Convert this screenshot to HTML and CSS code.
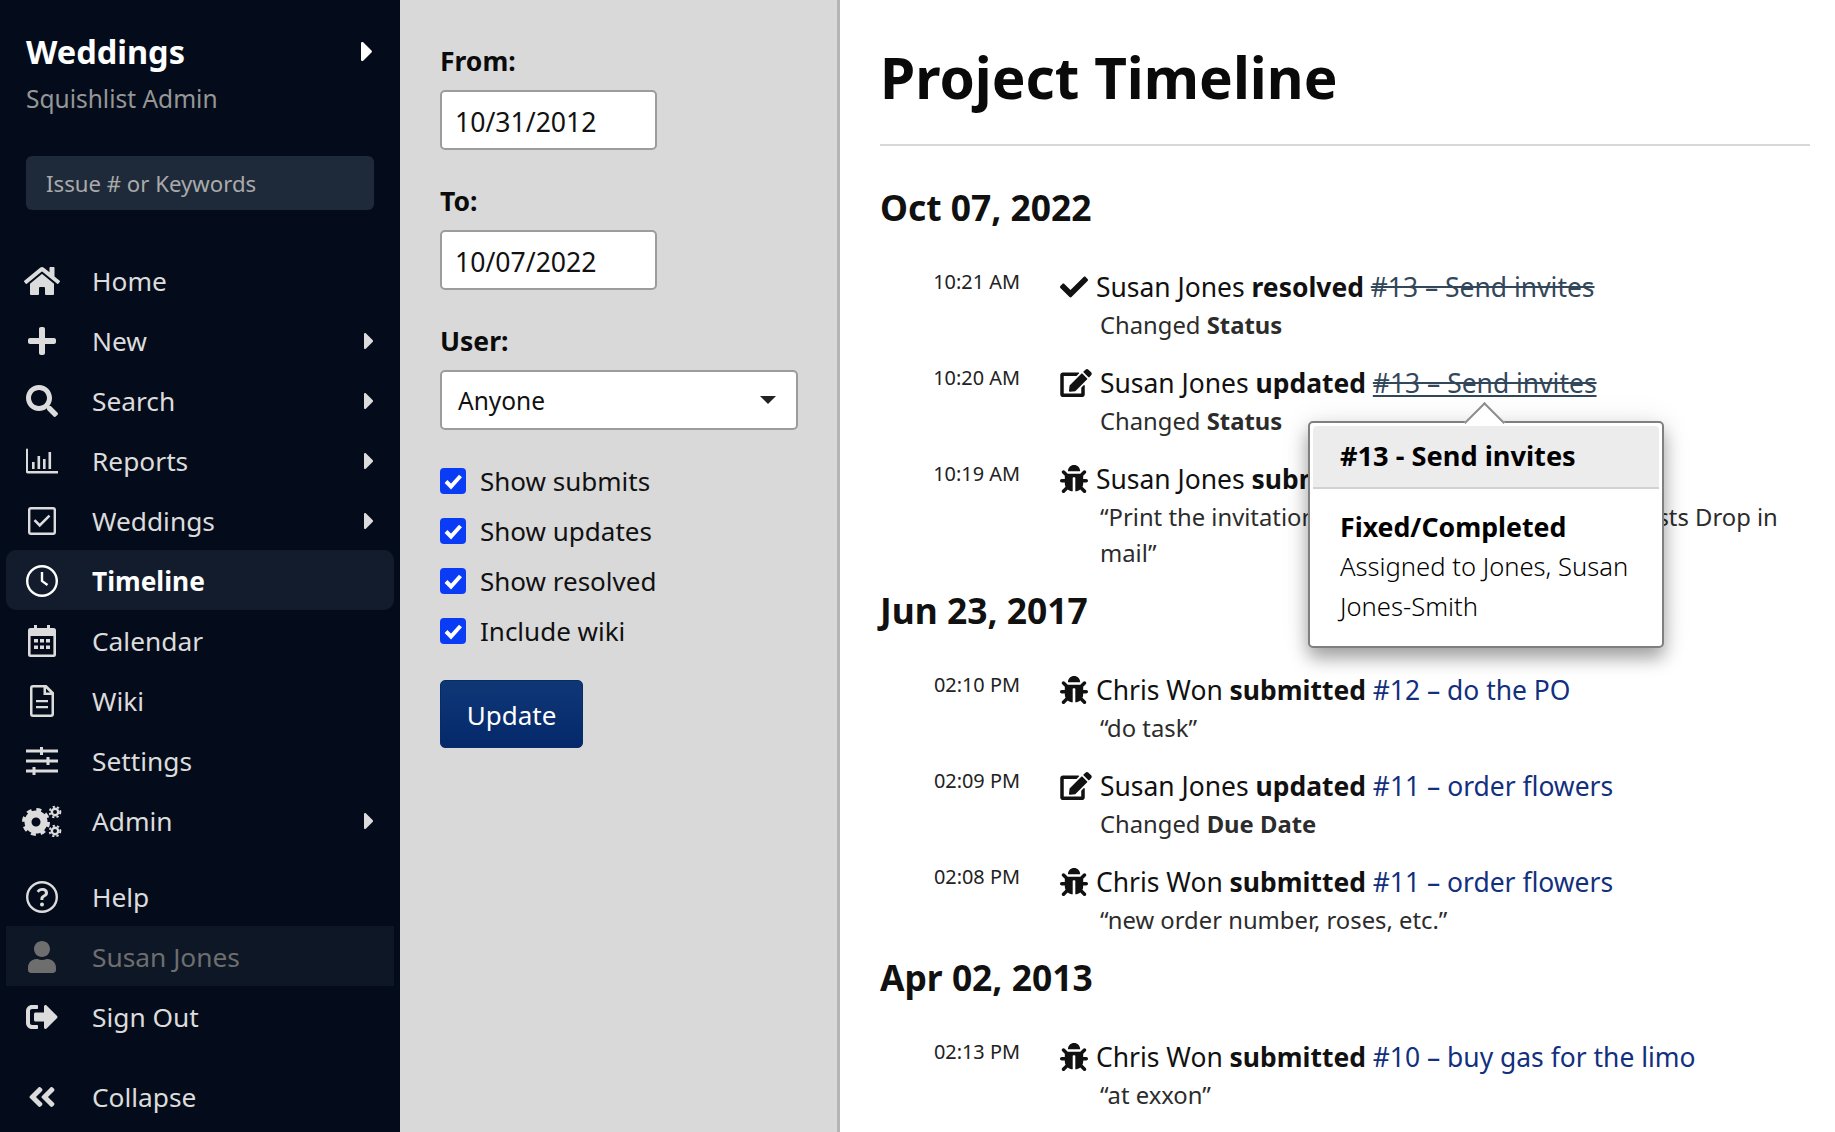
FILE: index.html
```html
<!DOCTYPE html>
<html lang="en">
<head>
<meta charset="utf-8">
<title>Project Timeline</title>
<link rel="stylesheet" href="styles.css">
</head>
<body>
<svg class="defs" width="0" height="0" aria-hidden="true">
  <symbol id="i-caret" viewBox="0 0 192 512"><path d="M0 384.662V127.338c0-17.818 21.543-26.741 34.142-14.142l128.662 128.662c7.81 7.81 7.81 20.474 0 28.284L34.142 398.804C21.543 411.404 0 402.48 0 384.662z"/></symbol>
  <symbol id="i-home" viewBox="0 0 576 512"><path d="M280.37 148.26L96 300.11V464a16 16 0 0 0 16 16l112.06-.29a16 16 0 0 0 15.92-16V368a16 16 0 0 1 16-16h64a16 16 0 0 1 16 16v95.64a16 16 0 0 0 16 16.05L464 480a16 16 0 0 0 16-16V300L295.67 148.26a12.19 12.19 0 0 0-15.3 0zM571.6 251.47L488 182.56V44.05a12 12 0 0 0-12-12h-56a12 12 0 0 0-12 12v72.61L318.47 43a48 48 0 0 0-61 0L4.34 251.47a12 12 0 0 0-1.6 16.9l25.5 31A12 12 0 0 0 45.15 301l235.22-193.74a12.19 12.19 0 0 1 15.3 0L530.9 301a12 12 0 0 0 16.9-1.6l25.5-31a12 12 0 0 0-1.7-16.93z"/></symbol>
  <symbol id="i-plus" viewBox="0 0 448 512"><path d="M416 208H272V64c0-17.67-14.33-32-32-32h-32c-17.67 0-32 14.33-32 32v144H32c-17.67 0-32 14.33-32 32v32c0 17.67 14.33 32 32 32h144v144c0 17.67 14.33 32 32 32h32c17.67 0 32-14.33 32-32V304h144c17.67 0 32-14.33 32-32v-32c0-17.67-14.33-32-32-32z"/></symbol>
  <symbol id="i-search" viewBox="0 0 512 512"><path d="M505 442.7L405.3 343c-4.5-4.5-10.6-7-17-7H372c27.6-35.3 44-79.7 44-128C416 93.1 322.9 0 208 0S0 93.1 0 208s93.1 208 208 208c48.3 0 92.7-16.4 128-44v16.3c0 6.4 2.5 12.5 7 17l99.7 99.7c9.4 9.4 24.6 9.4 33.9 0l28.3-28.3c9.4-9.4 9.4-24.6.1-34zM208 336c-70.7 0-128-57.2-128-128 0-70.7 57.2-128 128-128 70.7 0 128 57.2 128 128 0 70.7-57.2 128-128 128z"/></symbol>
  <symbol id="i-chart" viewBox="0 0 32 26"><path d="M0 1.5a1 1 0 0 1 2 0V23h30v2.4H1.5A1.5 1.5 0 0 1 0 24zM6 14h2.6v7H6zM11.5 8h2.6v13h-2.6zM17 11h2.6v10H17zM22.5 4h2.6v17h-2.6z"/></symbol>
  <symbol id="i-checksq" viewBox="0 0 28 28"><path fill-rule="evenodd" d="M3 0h22a3 3 0 0 1 3 3v22a3 3 0 0 1-3 3H3a3 3 0 0 1-3-3V3a3 3 0 0 1 3-3zm0 2.4a.6.6 0 0 0-.6.6v22c0 .3.3.6.6.6h22c.3 0 .6-.3.6-.6V3a.6.6 0 0 0-.6-.6z"/><path d="M11.7 20.2 5.6 14.100l1.800-1.800 4.300 4.300 8.900-8.900 1.800 1.800z"/></symbol>
  <symbol id="i-clock" viewBox="0 0 32 32"><path fill-rule="evenodd" d="M16 0a16 16 0 1 1 0 32 16 16 0 0 1 0-32zm0 2.400a13.600 13.600 0 1 0 0 27.200 13.600 13.600 0 0 0 0-27.200z"/><path d="M14.800 7h2.400v8.400l5 3.700-1.400 1.900-6-4.500z"/></symbol>
  <symbol id="i-cal" viewBox="0 0 28 32"><path fill-rule="evenodd" d="M6 0h3v3h10V0h3v3h3.500A2.500 2.500 0 0 1 28 5.500V29.500a2.500 2.500 0 0 1-2.500 2.500h-23A2.500 2.500 0 0 1 0 29.500V5.500A2.500 2.500 0 0 1 2.500 3H6zM2.600 11v18.400h22.800V11z"/><path d="M6 14h4v3.500H6zM12 14h4v3.500h-4zM18 14h4v3.500h-4zM6 20.500h4V24H6zM12 20.500h4V24h-4zM18 20.500h4V24h-4z"/></symbol>
  <symbol id="i-file" viewBox="0 0 24 32"><path fill-rule="evenodd" d="M3 0h13.500L24 7.500V29a3 3 0 0 1-3 3H3a3 3 0 0 1-3-3V3a3 3 0 0 1 3-3zm0 2.500a.5.500 0 0 0-.5.500v26c0 .3.200.5.500.5h18c.3 0 .5-.2.500-.5V10h-8V2.500zM16 3.500V7.500h4z"/><path d="M6 15h12v2.300H6zM6 21h12v2.300H6z"/></symbol>
  <symbol id="i-sliders" viewBox="0 0 32 28"><path d="M0 2.500h14V0h3v2.500h15v3H17V8h-3V5.500H0zM0 12.500h20.500V10h3v2.500H32v3h-8.500V18h-3v-2.500H0zM0 22.500h6.500V20h3v2.500H32v3H9.500V28h-3v-2.500H0z"/></symbol>
  <symbol id="i-cogs" viewBox="0 0 40 32">
    <g><circle cx="14" cy="17" r="8" fill="none" stroke="currentColor" stroke-width="7"/><circle cx="14" cy="17" r="12" fill="none" stroke="currentColor" stroke-width="4" stroke-dasharray="4.800 4.620"/></g>
    <g><circle cx="33" cy="7" r="3.200" fill="none" stroke="currentColor" stroke-width="2.400"/><circle cx="33" cy="7" r="5.300" fill="none" stroke="currentColor" stroke-width="2" stroke-dasharray="2.200 2.200"/></g>
    <g><circle cx="33" cy="26" r="3.200" fill="none" stroke="currentColor" stroke-width="2.400"/><circle cx="33" cy="26" r="5.300" fill="none" stroke="currentColor" stroke-width="2" stroke-dasharray="2.200 2.200"/></g>
  </symbol>
  <symbol id="i-help" viewBox="0 0 32 32"><path fill-rule="evenodd" d="M16 0a16 16 0 1 1 0 32 16 16 0 0 1 0-32zm0 2.400a13.600 13.600 0 1 0 0 27.200 13.600 13.600 0 0 0 0-27.200z"/><path d="M16.200 7c3.500 0 5.800 2 5.800 4.700 0 2.300-1.200 3.400-2.900 4.400-1.300.8-1.700 1.200-1.700 2.200v.7h-3v-1c0-2 1-3 2.500-3.900 1.400-.8 2-1.300 2-2.300 0-1.200-1.100-2-2.700-2-1.500 0-2.500.7-3.300 1.900l-2.300-1.600C12.100 8 13.800 7 16.200 7zM16 21.500a2 2 0 1 1 0 4 2 2 0 0 1 0-4z"/></symbol>
  <symbol id="i-user" viewBox="0 0 448 512"><path d="M224 256c70.700 0 128-57.300 128-128S294.700 0 224 0 96 57.300 96 128s57.300 128 128 128zm89.600 32h-16.700c-22.200 10.200-46.900 16-72.900 16s-50.600-5.800-72.900-16h-16.700C60.200 288 0 348.200 0 422.400V464c0 26.500 21.500 48 48 48h352c26.500 0 48-21.500 48-48v-41.600c0-74.200-60.200-134.400-134.400-134.400z"/></symbol>
  <symbol id="i-out" viewBox="0 0 512 512"><path d="M497 273L329 441c-15 15-41 4.500-41-17v-96H152c-13.300 0-24-10.700-24-24v-96c0-13.300 10.700-24 24-24h136V88c0-21.400 25.900-32 41-17l168 168c9.300 9.400 9.300 24.600 0 34zM192 436v-40c0-6.600-5.400-12-12-12H96c-17.700 0-32-14.300-32-32V160c0-17.700 14.300-32 32-32h84c6.600 0 12-5.400 12-12V76c0-6.600-5.400-12-12-12H96c-53 0-96 43-96 96v192c0 53 43 96 96 96h84c6.600 0 12-5.400 12-12z"/></symbol>
  <symbol id="i-dbl" viewBox="0 0 448 512"><path d="M223.700 239l136-136c9.400-9.400 24.600-9.400 33.900 0l22.600 22.600c9.400 9.400 9.400 24.600 0 33.900L319.900 256l96.400 96.400c9.400 9.400 9.400 24.600 0 33.900L393.700 409c-9.400 9.400-24.600 9.400-33.900 0l-136-136c-9.500-9.400-9.500-24.600-.1-34zm-192 34l136 136c9.400 9.400 24.600 9.400 33.900 0l22.600-22.600c9.400-9.400 9.400-24.600 0-33.900L127.900 256l96.400-96.400c9.400-9.400 9.400-24.600 0-33.900L201.700 103c-9.400-9.400-24.600-9.400-33.900 0l-136 136c-9.500 9.400-9.500 24.600-.1 34z"/></symbol>
  <symbol id="i-check" viewBox="0 0 512 512"><path d="M173.898 439.404l-166.400-166.400c-9.997-9.997-9.997-26.206 0-36.204l36.203-36.204c9.997-9.998 26.207-9.998 36.204 0L192 312.690 432.095 72.596c9.997-9.997 26.207-9.997 36.204 0l36.203 36.204c9.997 9.997 9.997 26.206 0 36.204l-294.400 294.401c-9.998 9.997-26.207 9.997-36.204-.001z"/></symbol>
  <symbol id="i-edit" viewBox="0 0 576 512"><path d="M402.600 83.200l90.200 90.200c3.800 3.800 3.800 10 0 13.800L274.400 405.600l-92.800 10.300c-12.400 1.400-22.900-9.100-21.500-21.500l10.300-92.800L388.800 83.200c3.800-3.800 10-3.800 13.800 0zm162-22.900l-48.800-48.800c-15.200-15.200-39.900-15.200-55.200 0l-35.400 35.400c-3.800 3.800-3.800 10 0 13.800l90.200 90.200c3.800 3.800 10 3.800 13.800 0l35.400-35.400c15.200-15.300 15.200-40 0-55.200zM384 346.200V448H64V128h229.800c3.200 0 6.200-1.300 8.500-3.500l40-40c7.600-7.600 2.200-20.500-8.500-20.500H48C21.500 64 0 85.500 0 112v352c0 26.500 21.500 48 48 48h352c26.500 0 48-21.500 48-48V306.200c0-10.700-12.900-16-20.500-8.500l-40 40c-2.200 2.300-3.500 5.300-3.500 8.500z"/></symbol>
  <symbol id="i-bug" viewBox="0 0 512 512"><path d="M511.988 288.900c-.478 17.430-15.217 31.100-32.653 31.100H424v16c0 21.864-4.882 42.584-13.600 61.145l60.228 60.228c12.496 12.497 12.496 32.758 0 45.255-12.498 12.497-32.759 12.496-45.256 0l-54.736-54.736C345.886 467.965 314.351 480 280 480V236c0-6.627-5.373-12-12-12h-24c-6.627 0-12 5.373-12 12v244c-34.351 0-65.886-12.035-90.636-32.108l-54.736 54.736c-12.498 12.497-32.759 12.496-45.256 0-12.496-12.497-12.496-32.758 0-45.255l60.228-60.228C92.882 378.584 88 357.864 88 336v-16H32.666C15.230 320 .491 306.330.013 288.900-.484 270.816 14.028 256 32 256h56v-58.745l-46.628-46.628c-12.496-12.497-12.496-32.758 0-45.255 12.498-12.497 32.758-12.497 45.256 0L141.255 160h229.489l54.627-54.627c12.498-12.497 32.758-12.497 45.256 0 12.496 12.497 12.496 32.758 0 45.255L424 197.255V256h56c17.972 0 32.484 14.816 31.988 32.900zM257 0c-61.856 0-112 50.144-112 112h224C369 50.144 318.856 0 257 0z"/></symbol>
</svg>

<div class="app">
  <aside class="sidebar">
    <header class="brand">
      <div class="brand-top">
        <span class="brand-name">Weddings</span>
        <svg class="caret caret-lg"><use href="#i-caret"/></svg>
      </div>
      <div class="brand-sub">Squishlist Admin</div>
    </header>
    <div class="quick-search">Issue # or Keywords</div>
    <nav class="nav">
      <a class="nav-item"><span class="nav-ico"><svg class="ic-home"><use href="#i-home"/></svg></span>Home</a>
      <a class="nav-item"><span class="nav-ico"><svg class="ic-plus"><use href="#i-plus"/></svg></span>New<svg class="caret"><use href="#i-caret"/></svg></a>
      <a class="nav-item"><span class="nav-ico"><svg class="ic-search"><use href="#i-search"/></svg></span>Search<svg class="caret"><use href="#i-caret"/></svg></a>
      <a class="nav-item"><span class="nav-ico"><svg class="ic-chart"><use href="#i-chart"/></svg></span>Reports<svg class="caret"><use href="#i-caret"/></svg></a>
      <a class="nav-item"><span class="nav-ico"><svg class="ic-checksq"><use href="#i-checksq"/></svg></span>Weddings<svg class="caret"><use href="#i-caret"/></svg></a>
      <a class="nav-item is-current"><span class="nav-ico"><svg class="ic-clock"><use href="#i-clock"/></svg></span>Timeline</a>
      <a class="nav-item"><span class="nav-ico"><svg class="ic-cal"><use href="#i-cal"/></svg></span>Calendar</a>
      <a class="nav-item"><span class="nav-ico"><svg class="ic-file"><use href="#i-file"/></svg></span>Wiki</a>
      <a class="nav-item"><span class="nav-ico"><svg class="ic-sliders"><use href="#i-sliders"/></svg></span>Settings</a>
      <a class="nav-item"><span class="nav-ico"><svg class="ic-cogs"><use href="#i-cogs"/></svg></span>Admin<svg class="caret"><use href="#i-caret"/></svg></a>
    </nav>
    <nav class="nav nav-second">
      <a class="nav-item"><span class="nav-ico"><svg class="ic-clock"><use href="#i-help"/></svg></span>Help</a>
      <a class="nav-item is-user"><span class="nav-ico"><svg class="ic-user"><use href="#i-user"/></svg></span>Susan Jones</a>
      <a class="nav-item"><span class="nav-ico"><svg class="ic-out"><use href="#i-out"/></svg></span>Sign Out</a>
    </nav>
    <nav class="nav nav-third">
      <a class="nav-item"><span class="nav-ico"><svg class="ic-dbl"><use href="#i-dbl"/></svg></span>Collapse</a>
    </nav>
  </aside>

  <section class="filters">
    <div class="field">
      <div class="field-label">From:</div>
      <div class="input">10/31/2012</div>
    </div>
    <div class="field">
      <div class="field-label">To:</div>
      <div class="input">10/07/2022</div>
    </div>
    <div class="field">
      <div class="field-label">User:</div>
      <div class="select">Anyone<span class="select-arrow"></span></div>
    </div>
    <div class="checks">
      <label class="check"><span class="box"><svg viewBox="0 0 26 26"><path d="M6 13.500l5 5L20.500 8" /></svg></span>Show submits</label>
      <label class="check"><span class="box"><svg viewBox="0 0 26 26"><path d="M6 13.500l5 5L20.500 8" /></svg></span>Show updates</label>
      <label class="check"><span class="box"><svg viewBox="0 0 26 26"><path d="M6 13.500l5 5L20.500 8" /></svg></span>Show resolved</label>
      <label class="check"><span class="box"><svg viewBox="0 0 26 26"><path d="M6 13.500l5 5L20.500 8" /></svg></span>Include wiki</label>
    </div>
    <button class="update" type="button">Update</button>
  </section>

  <main class="main">
    <h1 class="title">Project Timeline</h1>

    <h2 class="day day-first">Oct 07, 2022</h2>
    <div class="event">
      <div class="time">10:21 AM</div>
      <div class="body">
        <div class="head"><svg class="ev-ico ev-check"><use href="#i-check"/></svg>Susan Jones <b>resolved</b> <a class="link done">#13 – Send invites</a></div>
        <div class="sub">Changed <b>Status</b></div>
      </div>
    </div>
    <div class="event">
      <div class="time">10:20 AM</div>
      <div class="body">
        <div class="head"><svg class="ev-ico ev-edit"><use href="#i-edit"/></svg>Susan Jones <b>updated</b> <a class="link done hover">#13 – Send invites</a></div>
        <div class="sub">Changed <b>Status</b></div>
      </div>
    </div>
    <div class="event">
      <div class="time">10:19 AM</div>
      <div class="body">
        <div class="head"><svg class="ev-ico ev-bug"><use href="#i-bug"/></svg>Susan Jones <b>submitted</b> <a class="link done">#13 – Send invites</a></div>
        <div class="sub">“Print the invitations and send them to all the Guests Drop in mail”</div>
      </div>
    </div>

    <h2 class="day">Jun 23, 2017</h2>
    <div class="event">
      <div class="time">02:10 PM</div>
      <div class="body">
        <div class="head"><svg class="ev-ico ev-bug"><use href="#i-bug"/></svg>Chris Won <b>submitted</b> <a class="link">#12 – do the PO</a></div>
        <div class="sub">“do task”</div>
      </div>
    </div>
    <div class="event">
      <div class="time">02:09 PM</div>
      <div class="body">
        <div class="head"><svg class="ev-ico ev-edit"><use href="#i-edit"/></svg>Susan Jones <b>updated</b> <a class="link">#11 – order flowers</a></div>
        <div class="sub">Changed <b>Due Date</b></div>
      </div>
    </div>
    <div class="event">
      <div class="time">02:08 PM</div>
      <div class="body">
        <div class="head"><svg class="ev-ico ev-bug"><use href="#i-bug"/></svg>Chris Won <b>submitted</b> <a class="link">#11 – order flowers</a></div>
        <div class="sub">“new order number, roses, etc.”</div>
      </div>
    </div>

    <h2 class="day">Apr 02, 2013</h2>
    <div class="event">
      <div class="time">02:13 PM</div>
      <div class="body">
        <div class="head"><svg class="ev-ico ev-bug"><use href="#i-bug"/></svg>Chris Won <b>submitted</b> <a class="link">#10 – buy gas for the limo</a></div>
        <div class="sub">“at exxon”</div>
      </div>
    </div>

    <div class="popover">
      <span class="popover-arrow"></span>
      <div class="popover-head">#13 - Send invites</div>
      <div class="popover-body">
        <div class="popover-status">Fixed/Completed</div>
        <div class="popover-text">Assigned to Jones, Susan Jones-Smith</div>
      </div>
    </div>
  </main>
</div>
</body>
</html>
```

FILE: styles.css
```css
* { box-sizing: border-box; }
html, body { margin: 0; height: 100%; }
body {
  font-family: "Noto Sans", "Open Sans", sans-serif;
  font-size: 26px;
  color: #111;
  background: #fff;
  overflow: hidden;
}
.defs { position: absolute; }
.app { display: flex; height: 1132px; overflow: hidden; }

/* sidebar */
.sidebar { width: 400px; flex: none; background: #040c1b; color: #dcdcdc; font-size: 26.3px; }
.brand { padding: 29px 26px 0; height: 156px; }
.brand-top { display: flex; align-items: center; justify-content: space-between; height: 44px; padding-right: 1px; }
.brand-name { font-size: 32.5px; font-weight: 700; color: #fff; }
.brand-sub { color: #969696; font-size: 24.5px; line-height: 36px; margin-top: 8px; }
.caret { width: 10.4px; height: 28px; fill: currentColor; margin-left: auto; }
.caret-lg { width: 12.4px; height: 33px; margin-left: 0; color: #fff; }
.quick-search {
  margin: 0 26px;
  height: 54px;
  line-height: 56px;
  padding-left: 20px;
  background: #1e2a3a;
  border-radius: 6px;
  color: #aaa;
  font-size: 22.2px;
}
.nav { padding: 0 6px; margin-top: 40px; }
.nav-second { margin-top: 16px; }
.nav-third { margin-top: 20px; }
.nav-item {
  display: flex;
  align-items: center;
  height: 60px;
  padding: 2px 20px 0 0;
  border-radius: 10px;
}
.nav-ico { width: 86px; padding-left: 12px; padding-right: 26px; display: flex; justify-content: center; flex: none; }
.nav-ico svg { fill: currentColor; display: block; flex: none; }
.is-current { background: #121c2c; color: #fff; font-weight: 700; }
.is-user { background: #0d1725; color: #6e6e6e; border-radius: 0; }
.ic-home { width: 36px; height: 32px; }
.ic-plus { width: 28px; height: 32px; }
.ic-search { width: 32px; height: 32px; }
.ic-chart { width: 32px; height: 26px; }
.ic-checksq { width: 28px; height: 28px; }
.ic-clock { width: 32px; height: 32px; }
.ic-cal { width: 28px; height: 32px; }
.ic-file { width: 24px; height: 32px; }
.ic-sliders { width: 32px; height: 28px; }
.ic-cogs { width: 40px; height: 32px; }
.ic-user { width: 28px; height: 32px; }
.ic-out { width: 32px; height: 32px; }
.ic-dbl { width: 28px; height: 32px; }

/* filter column */
.filters {
  width: 440px;
  flex: none;
  background: #d9d9d9;
  border-right: 3px solid #b5b5b5;
  padding: 44px 36px 0 40px;
}
.field + .field { margin-top: 34px; }
.field-label { font-size: 26.5px; font-weight: 700; line-height: 34px; color: #0b0b0b; margin-bottom: 12px; }
.input, .select {
  height: 60px;
  background: #fff;
  border: 2px solid #9c9c9c;
  border-radius: 5px;
  display: flex;
  align-items: center;
}
.input { width: 217px; padding: 4px 0 0 13px; font-size: 26.6px; }
.select { width: 358px; padding: 0 20px 0 16px; justify-content: space-between; font-size: 24.5px; }
.select-arrow { border: 8px solid transparent; border-top: 8px solid #222; border-bottom: 0; }
.checks { margin-top: 31px; display: flex; flex-direction: column; gap: 11px; }
.check { display: flex; align-items: center; height: 39px; }
.box { width: 26px; height: 26px; border-radius: 4px; background: #0a3cf5; margin-right: 14px; flex: none; }
.box svg { display: block; fill: none; stroke: #fff; stroke-width: 4; }
.update {
  display: block;
  margin-top: 30px;
  width: 143px;
  height: 68px;
  padding: 2px 0 0;
  border: 1px solid #0a2c66;
  border-radius: 5px;
  background: linear-gradient(#0f3776, #05296b);
  color: #fff;
  font: inherit;
}

/* timeline */
.main { flex: 1; padding: 0 25px 0 40px; position: relative; min-width: 0; }
.title {
  margin: 0;
  height: 146px;
  padding-top: 37px;
  font-size: 56.7px;
  line-height: 80px;
  font-weight: 700;
  color: #0a0a0a;
  border-bottom: 2px solid #d8d8d8;
}
.day { margin: 0; font-size: 35.4px; line-height: 46px; font-weight: 700; color: #111; padding-top: 15px; height: 99px; }
.day-first { padding-top: 38px; height: 122px; }
.event { display: grid; grid-template-columns: 140px 1fr; column-gap: 40px; }
.event + .event { margin-top: 20px; }
.time { text-align: right; font-size: 19.9px; line-height: 28px; color: #222; }
.head { line-height: 38px; font-size: 26.45px; white-space: nowrap; }
.sub { padding: 1px 0 0 40px; margin-bottom: 1px; line-height: 36px; font-size: 23.8px; color: #2c2c2c; }
.ev-ico { fill: #111; display: inline-block; vertical-align: -4px; margin-right: 8px; }
.ev-check { width: 28px; height: 28px; }
.ev-edit { width: 32px; height: 28px; }
.ev-bug { width: 28px; height: 28px; }
.link { color: #12307e; }
.done { color: #33475b; text-decoration: line-through; }
.hover { text-decoration: underline line-through; }

/* popover */
.popover {
  position: absolute;
  left: 468px;
  top: 421px;
  width: 356px;
  height: 227px;
  padding: 3px;
  background: #fff;
  border: 2px solid #7f7f7f;
  border-radius: 5px;
  box-shadow: 0 10px 18px rgba(0, 0, 0, .35), 0 0 32px rgba(0, 0, 0, .08);
  color: #000;
}
.popover-arrow {
  position: absolute;
  left: 160px;
  top: -15px;
  width: 29px;
  height: 29px;
  background: #fff;
  border-top: 2px solid #8c8c8c;
  border-left: 2px solid #8c8c8c;
  transform: rotate(45deg);
}
.popover-head {
  position: relative;
  height: 63px;
  line-height: 60px;
  padding-left: 27px;
  background: #ececec;
  border-bottom: 2px solid #d2d2d2;
  border-radius: 4px 4px 0 0;
  font-size: 27.2px;
  font-weight: 700;
}
.popover-body { padding: 18px 4px 0 27px; line-height: 40px; }
.popover-status { font-size: 26.7px; font-weight: 700; }
.popover-text { font-weight: 300; font-size: 25.6px; }
```
